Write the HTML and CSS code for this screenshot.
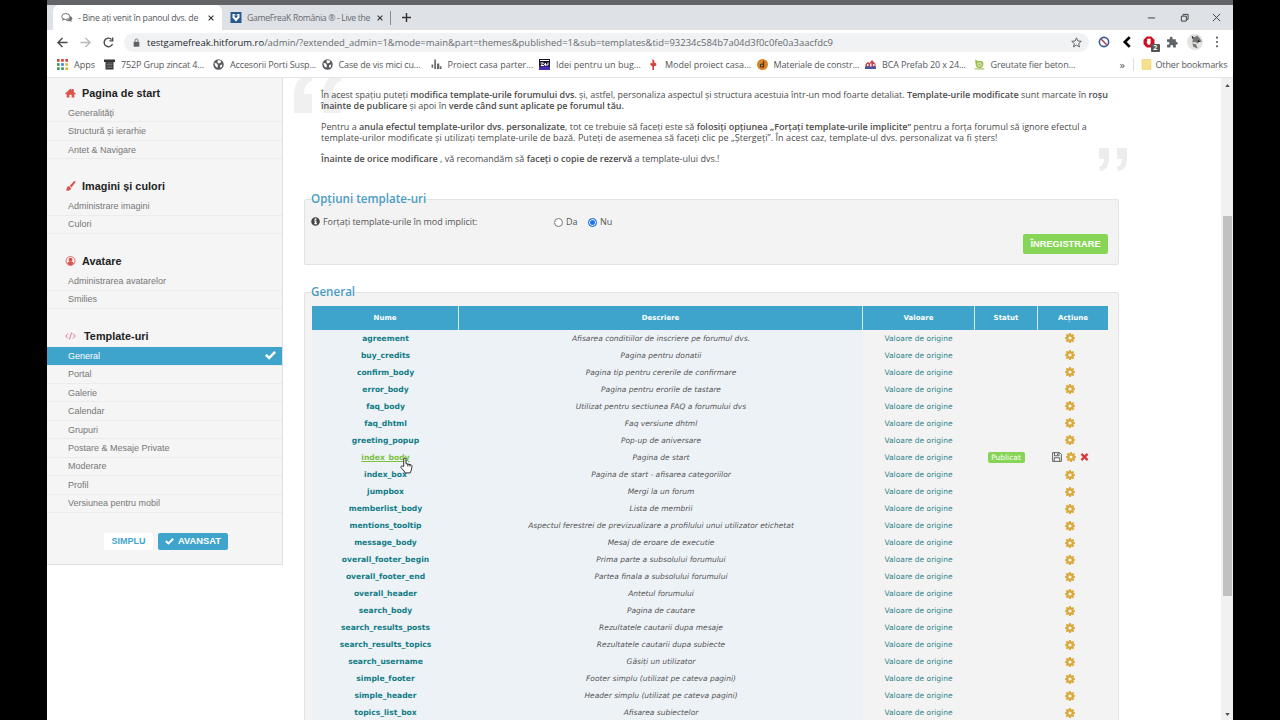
FILE: index.html
```html
<!DOCTYPE html>
<html lang="ro">

<head>
  <meta charset="UTF-8">
  <title>Panou de administrare</title>
  <link rel="stylesheet" href="styles.css">
</head>

<body>
  <!-- shared icons -->
  <svg class="defs">
    <symbol id="gear" viewBox="0 0 20 20">
      <path fill-rule="evenodd" d="M8.3 0h3.4l.5 2.6 1.7.7 2.2-1.5 2.3 2.3-1.5 2.2.7 1.7 2.4.5v3.2l-2.4.5-.7 1.7 1.5 2.2-2.3 2.3-2.2-1.5-1.7.7-.5 2.4H8.3l-.5-2.4-1.7-.7-2.2 1.5-2.3-2.3 1.5-2.2-.7-1.7L0 11.7V8.3l2.4-.5.7-1.7-1.5-2.2 2.3-2.3 2.2 1.5 1.7-.7zM10 6.8a3.2 3.2 0 1 0 0 6.4 3.2 3.2 0 0 0 0-6.4z" />
    </symbol>
    <symbol id="check" viewBox="0 0 20 16">
      <path d="M0 8.5l3.2-3.2 4.3 4.2L16.8 0 20 3.2 7.5 15.7z" />
    </symbol>
    <symbol id="globe" viewBox="0 0 20 20">
      <circle cx="10" cy="10" r="9.5" fill="#55585c" />
      <path d="M3 7l4 1 2 4-1 4-3-2-2-4zM9 2l6 1-1 4-4 1-2-2zM13 11l4-1-1 5-3 1z" fill="#fff" />
    </symbol>
  </svg>

  <div class="screen">
    <div class="strip"></div>

    <div class="tabs">
      <div class="tab active">
        <svg class="tab-icon" viewBox="0 0 24 20">
          <ellipse cx="9.5" cy="8" rx="8" ry="6" fill="#fff" stroke="#666" stroke-width="1.8" />
          <path d="M4 12l-2 5 6-3zM18 7c7 3 5 8 2 9l2 3-5-2c-4 1-7-1-7-2 5 0 9-3 8-8z" fill="#777" />
        </svg>
        <span class="tab-text">- Bine ați venit în panoul dvs. de</span>
        <svg class="close" viewBox="0 0 10 10"><path d="M1 1l8 8M9 1l-8 8" /></svg>
      </div>
      <div class="tab second">
        <svg class="tab-icon" viewBox="0 0 22 22">
          <rect width="22" height="22" fill="#285a8e" />
          <path d="M4 4h14v7l-7 8-7-8z" fill="#fff" />
          <path d="M7 7l4 5 4-5M8 3l3 4 3-4" fill="#285a8e" stroke="#285a8e" />
        </svg>
        <span class="tab-text">GameFreaK România ® - Live the</span>
        <svg class="close" viewBox="0 0 10 10"><path d="M1 1l8 8M9 1l-8 8" /></svg>
      </div>
      <svg class="plus" viewBox="0 0 10 10"><path d="M5 0v10M0 5h10" /></svg>
      <div class="win">
        <svg viewBox="0 0 10 10"><path d="M1 5.5h8" /></svg>
        <svg viewBox="0 0 10 10"><path d="M1.5 3.5h5.5v5.5h-5.5zM3.5 3V1.5H9V7H7.5" /></svg>
        <svg viewBox="0 0 10 10"><path d="M1 1l8 8M9 1l-8 8" /></svg>
      </div>
    </div>

    <div class="toolbar">
      <div class="nav">
        <svg viewBox="0 0 12 12"><path d="M11.5 6H1.5M6 1L1 6l5 5" /></svg>
        <svg class="off" viewBox="0 0 12 12"><path d="M.5 6h10M6 1l5 5-5 5" /></svg>
        <svg viewBox="0 0 12 12"><path d="M10.4 7.5a4.7 4.7 0 1 1-1-4.8M10.6 .5v3.7H7" /></svg>
      </div>
      <div class="address">
        <svg class="lock" viewBox="0 0 10 12">
          <path d="M1 5h8v7H1z" fill="#5f6368" />
          <path d="M3 5V3a2 2 0 0 1 4 0v2" fill="none" stroke="#5f6368" stroke-width="1.3" />
        </svg>
        <span class="url"><b>testgamefreak.hitforum.ro</b>/admin/?extended_admin=1&amp;mode=main&amp;part=themes&amp;published=1&amp;sub=templates&amp;tid=93234c584b7a04d3f0c0fe0a3aacfdc9</span>
        <svg class="star" viewBox="0 0 20 20"><path d="M10 1.5l2.5 5.8 6.2.5-4.7 4.1 1.4 6.1-5.4-3.3L4.6 18 6 11.9 1.3 7.8l6.2-.5z" /></svg>
      </div>
      <div class="extensions">
        <svg viewBox="0 0 22 22"><circle cx="11" cy="11" r="8.5" fill="#fff" stroke="#3e5a94" stroke-width="3" /><path d="M6 6l10 10" stroke="#a43a52" stroke-width="2.5" /></svg>
        <svg viewBox="0 0 22 22"><path d="M16 2L7 11l9 9" fill="none" stroke="#000" stroke-width="5" /></svg>
        <span class="adblock">
          <svg viewBox="0 0 22 22"><path d="M7 1h8l6 6v8l-6 6H7l-6-6V7z" fill="#cb1121" /><path d="M8 5h6v7l-1 4H9l-2-4z" fill="#fff" /></svg>
          <span class="count">2</span>
        </span>
        <svg viewBox="0 0 22 22"><path d="M2 6h5V4a2.500 2.500 0 0 1 5 0v2h6v5h1a2.500 2.500 0 0 1 0 5h-1v5h-5v-2a2.500 2.500 0 0 0-5 0v2H2v-5h2a2.500 2.500 0 0 0 0-5H2z" fill="#5f6368" /></svg>
        <svg class="avatar" viewBox="0 0 30 30"><circle cx="15" cy="15" r="15" fill="#e3e3e0" /><path d="M8 4l4 3 7-4 5 5 4 7-6-1-2 4-5-3-5 1 1-6zM10 18l7 1 3 8-8-3z" fill="#777" /><path d="M9 3l4 4-3 2zM20 11l5 3-4 2z" fill="#222" /></svg>
        <svg class="dots" viewBox="0 0 4 14"><circle cx="2" cy="2" r="1.3" /><circle cx="2" cy="7" r="1.3" /><circle cx="2" cy="12" r="1.3" /></svg>
      </div>
    </div>

    <div class="bookmarks">
      <div class="bm apps">
        <svg viewBox="0 0 10 10">
          <path d="M0 0h2.4v2.4H0zM3.8 0h2.4v2.4H3.8zM7.6 0H10v2.4H7.6z" fill="#d9453d" />
          <path d="M0 3.8h2.4v2.4H0z" fill="#3b9b58" /><path d="M3.8 3.8h2.4v2.4H3.8z" fill="#3a7ad9" /><path d="M7.6 3.8H10v2.4H7.6z" fill="#e8b42c" />
          <path d="M0 7.6h2.4V10H0zM3.8 7.6h2.4V10H3.8z" fill="#3b9b58" /><path d="M7.6 7.6H10V10H7.6z" fill="#e8b42c" />
        </svg>Apps</div>
      <div class="bm zinc">
        <svg viewBox="0 0 22 20"><path d="M0 0h22v5H0zM3 5h16v15H3z" fill="#333" /><path d="M5 7h12M5 10h12M5 13h12M5 16h12" stroke="#aaa" /></svg>752P Grup zincat 4...</div>
      <div class="bm porti"><svg><use href="#globe" /></svg>Accesorii Porti Susp...</div>
      <div class="bm vis"><svg><use href="#globe" /></svg>Case de vis mici cu...</div>
      <div class="bm parter">
        <svg viewBox="0 0 20 20"><path d="M1 10h3v6H1zM6 1h3v17H6zM11 8h4v10h-4zM16 13h3v5h-3z" fill="#666" /></svg>Proiect casa parter...</div>
      <div class="bm bug">
        <svg viewBox="0 0 22 22"><path d="M0 0h22v22H0z" fill="#17132a" /><path d="M0 15h22v7H0z" fill="#4a2bb5" /><path d="M2 3h18M3 8h6l-5 5h6M13 13V8l-2 4h7V7" fill="none" stroke="#fff" stroke-width="2" /></svg>Idei pentru un bug...</div>
      <div class="bm model">
        <svg viewBox="0 0 20 20"><path d="M8 0l4 3-1 3 4 2v4l-4 1v7H8v-6l-4-4 1-3 3 1z" fill="#d2423c" /></svg>Model proiect casa...</div>
      <div class="bm materiale">
        <svg viewBox="0 0 20 20"><circle cx="10" cy="10" r="10" fill="#d88428" /><circle cx="9" cy="12" r="3" fill="none" stroke="#432" stroke-width="2" /><path d="M12 3v12" stroke="#432" stroke-width="2" /></svg>Materiale de constr...</div>
      <div class="bm bca">
        <svg viewBox="0 0 22 20"><path d="M1 9l5-4 3 2 5-6 7 8v6H1z" fill="#c6454c" /><path d="M0 14h22v5H0z" fill="#4855a5" /><path d="M4 9h3v4H4zM10 8h3v6h-3zM16 9h3v4h-3z" fill="#f0e6ee" /></svg>BCA Prefab 20 x 24...</div>
      <div class="bm fier">
        <svg viewBox="0 0 20 20"><path d="M2 1l6 3c8-2 11 3 8 9-3 5-12 5-13-2z" fill="#9abf4a" /><circle cx="10" cy="10" r="3" fill="none" stroke="#fff" stroke-width="1.5" /><path d="M1 18h18" stroke="#9abf4a" stroke-width="2" /></svg>Greutate fier beton...</div>
      <span class="more">»</span>
      <div class="bm other">
        <svg viewBox="0 0 18 20"><path d="M1 1h16v18H1z" fill="#f8e18c" stroke="#e3c96a" /></svg>Other bookmarks</div>
    </div>

    <div class="page">
      <div class="sidebar">
        <h3><svg viewBox="0 0 20 18"><path d="M10 1l3 3V1.5h3V7l4 3.5-1.2 1.2L17 10.3V17h-5v-5H8v5H3v-6.7l-1.8 1.4L0 10.5z" /></svg>Pagina de start</h3>
        <ul>
          <li>Generalități</li>
          <li>Structură și ierarhie</li>
          <li>Antet &amp; Navigare</li>
        </ul>
        <h3><svg viewBox="0 0 20 20"><path d="M19.5.5c1 1 0 2.5-1 4L12 13 8.5 9.5 16 1.5c1-1 2.5-2 3.5-1zM7.5 10.500l3.500 3.500c0 4-5 7-11 4.500 3-1 2-3 3-5.500.8-2 2.500-3 4.500-2.500z" /></svg>Imagini și culori</h3>
        <ul>
          <li>Administrare imagini</li>
          <li>Culori</li>
        </ul>
        <h3><svg viewBox="0 0 20 20"><circle cx="10" cy="10" r="9" fill="none" stroke="#d9534f" stroke-width="1.6" /><circle cx="10" cy="7.5" r="4" /><path d="M3.5 15c1-3 3-4 6.5-4s5.5 1 6.5 4c-3 4-10 4-13 0z" /></svg>Avatare</h3>
        <ul>
          <li>Administrarea avatarelor</li>
          <li>Smilies</li>
        </ul>
        <h3 class="code"><svg viewBox="0 0 22 16"><path d="M6 3L1.5 8 6 13M16 3l4.5 5-4.5 5M13 1L9 15" fill="none" stroke="#d9627a" stroke-width="1.7" /></svg>Template-uri</h3>
        <ul>
          <li class="active">General<svg><use href="#check" /></svg></li>
          <li>Portal</li>
          <li>Galerie</li>
          <li>Calendar</li>
          <li>Grupuri</li>
          <li>Postare &amp; Mesaje Private</li>
          <li>Moderare</li>
          <li>Profil</li>
          <li>Versiunea pentru mobil</li>
        </ul>
        <div class="modes">
          <span class="simple">SIMPLU</span>
          <span class="advanced"><svg><use href="#check" /></svg>AVANSAT</span>
        </div>
      </div>

      <div class="main">
        <div class="intro">
          <svg class="quote-left" viewBox="0 0 48 39"><path d="M0 39V22C0 8 7 0 18 0v7c-5 1-8 6-8 13h8v19zM29 39V22C29 8 36 0 47 0v7c-5 1-8 6-8 13h8v19z" /></svg>
          <p>
            <span class="l1">În acest spațiu puteți <b>modifica template-urile forumului dvs.</b> și, astfel, personaliza aspectul și structura acestuia într-un mod foarte detaliat. <b>Template-urile modificate</b> sunt marcate în <b>roșu</b></span>
            <span class="l2"><b>înainte de publicare</b> și apoi în <b>verde când sunt aplicate pe forumul tău.</b></span>
          </p>
          <p>
            <span class="l3">Pentru a <b>anula efectul template-urilor dvs. personalizate</b>, tot ce trebuie să faceți este să <b>folosiți opțiunea „Forțați template-urile implicite”</b> pentru a forța forumul să ignore efectul a</span>
            <span class="l4">template-urilor modificate și utilizați template-urile de bază. Puteți de asemenea să faceți clic pe „Ștergeți”. În acest caz, template-ul dvs. personalizat va fi șters!</span>
          </p>
          <p>
            <span class="l5"><b>Înainte de orice modificare</b> , vă recomandăm să <b>faceți o copie de rezervă</b> a template-ului dvs.!</span>
          </p>
          <svg class="quote-right" viewBox="0 0 30 23"><path d="M1 0h10v11c0 7-4 12-9 12l-1-4c3-1 5-3 5-8H1zM19 0h10v11c0 7-4 12-9 12l-1-4c3-1 5-3 5-8h-5z" /></svg>
        </div>

        <fieldset class="options">
          <legend>Opțiuni template-uri</legend>
          <div class="option">
            <svg class="info" viewBox="0 0 20 20"><circle cx="10" cy="10" r="9.5" fill="#444" /><path d="M8 3.5h4v3H8zM7 8h5v6h1.5v2h-6.5v-2h1.500v-4H7z" fill="#fff" /></svg>
            <label class="question">Forțați template-urile în mod implicit:</label>
            <span class="radio"></span><label class="da">Da</label>
            <span class="radio checked"></span><label>Nu</label>
          </div>
          <span class="save">ÎNREGISTRARE</span>
        </fieldset>

        <fieldset class="general">
          <legend>General</legend>
          <table>
            <colgroup><col class="c-name"><col class="c-desc"><col class="c-value"><col class="c-status"><col class="c-action"></colgroup>
            <thead>
              <tr><th>Nume</th><th>Descriere</th><th>Valoare</th><th>Statut</th><th>Acțiune</th></tr>
            </thead>
            <tbody>
              <tr><td>agreement</td><td>Afisarea conditiilor de inscriere pe forumul dvs.</td><td>Valoare de origine</td><td></td><td><svg><use href="#gear" /></svg></td></tr>
              <tr><td>buy_credits</td><td>Pagina pentru donatii</td><td>Valoare de origine</td><td></td><td><svg><use href="#gear" /></svg></td></tr>
              <tr><td>confirm_body</td><td>Pagina tip pentru cererile de confirmare</td><td>Valoare de origine</td><td></td><td><svg><use href="#gear" /></svg></td></tr>
              <tr><td>error_body</td><td>Pagina pentru erorile de tastare</td><td>Valoare de origine</td><td></td><td><svg><use href="#gear" /></svg></td></tr>
              <tr><td>faq_body</td><td>Utilizat pentru sectiunea FAQ a forumului dvs</td><td>Valoare de origine</td><td></td><td><svg><use href="#gear" /></svg></td></tr>
              <tr><td>faq_dhtml</td><td>Faq versiune dhtml</td><td>Valoare de origine</td><td></td><td><svg><use href="#gear" /></svg></td></tr>
              <tr><td>greeting_popup</td><td>Pop-up de aniversare</td><td>Valoare de origine</td><td></td><td><svg><use href="#gear" /></svg></td></tr>
              <tr class="published">
                <td>
                  <span class="hovered">index_body
                    <svg class="cursor" viewBox="0 0 14 18"><path d="M4 10V2.200a1.200 1.200 0 0 1 2.400 0V7l5.200 1.200c1 .3 1.500 1 1.300 2L12 14.500 11 17H5.500L4.500 15 1.200 11.500C.3 10.300 1.500 9 2.700 9.700z" fill="#fff" stroke="#222" stroke-width="1" /><path d="M8.500 7.500V10M10.700 8v2.200" stroke="#222" /></svg>
                  </span>
                </td>
                <td>Pagina de start</td><td>Valoare de origine</td>
                <td><span class="badge">Publicat</span></td>
                <td>
                  <div class="actions">
                    <svg class="floppy" viewBox="0 0 20 20"><path d="M1.2 1.2h14l3.6 3.6v14H1.2zM5 1.5v6h9v-6M4.5 18.5v-7h11v7" /><path d="M11 3v3" /></svg>
                    <svg><use href="#gear" /></svg>
                    <svg class="delete" viewBox="0 0 16 16"><path d="M2.5 2.5l11 11M13.5 2.5l-11 11" /></svg>
                  </div>
                </td>
              </tr>
              <tr><td>index_box</td><td>Pagina de start - afisarea categoriilor</td><td>Valoare de origine</td><td></td><td><svg><use href="#gear" /></svg></td></tr>
              <tr><td>jumpbox</td><td>Mergi la un forum</td><td>Valoare de origine</td><td></td><td><svg><use href="#gear" /></svg></td></tr>
              <tr><td>memberlist_body</td><td>Lista de membrii</td><td>Valoare de origine</td><td></td><td><svg><use href="#gear" /></svg></td></tr>
              <tr><td>mentions_tooltip</td><td>Aspectul ferestrei de previzualizare a profilului unui utilizator etichetat</td><td>Valoare de origine</td><td></td><td><svg><use href="#gear" /></svg></td></tr>
              <tr><td>message_body</td><td>Mesaj de eroare de executie</td><td>Valoare de origine</td><td></td><td><svg><use href="#gear" /></svg></td></tr>
              <tr><td>overall_footer_begin</td><td>Prima parte a subsolului forumului</td><td>Valoare de origine</td><td></td><td><svg><use href="#gear" /></svg></td></tr>
              <tr><td>overall_footer_end</td><td>Partea finala a subsolului forumului</td><td>Valoare de origine</td><td></td><td><svg><use href="#gear" /></svg></td></tr>
              <tr><td>overall_header</td><td>Antetul forumului</td><td>Valoare de origine</td><td></td><td><svg><use href="#gear" /></svg></td></tr>
              <tr><td>search_body</td><td>Pagina de cautare</td><td>Valoare de origine</td><td></td><td><svg><use href="#gear" /></svg></td></tr>
              <tr><td>search_results_posts</td><td>Rezultatele cautarii dupa mesaje</td><td>Valoare de origine</td><td></td><td><svg><use href="#gear" /></svg></td></tr>
              <tr><td>search_results_topics</td><td>Rezultatele cautarii dupa subiecte</td><td>Valoare de origine</td><td></td><td><svg><use href="#gear" /></svg></td></tr>
              <tr><td>search_username</td><td>Găsiți un utilizator</td><td>Valoare de origine</td><td></td><td><svg><use href="#gear" /></svg></td></tr>
              <tr><td>simple_footer</td><td>Footer simplu (utilizat pe cateva pagini)</td><td>Valoare de origine</td><td></td><td><svg><use href="#gear" /></svg></td></tr>
              <tr><td>simple_header</td><td>Header simplu (utilizat pe cateva pagini)</td><td>Valoare de origine</td><td></td><td><svg><use href="#gear" /></svg></td></tr>
              <tr><td>topics_list_box</td><td>Afisarea subiectelor</td><td>Valoare de origine</td><td></td><td><svg><use href="#gear" /></svg></td></tr>
            </tbody>
          </table>
        </fieldset>
      </div>

      <div class="scrollbar">
        <svg viewBox="0 0 6 4"><path d="M0 4l3-4 3 4z" /></svg>
        <div class="thumb"></div>
        <svg viewBox="0 0 6 4"><path d="M0 0l3 4 3-4z" /></svg>
      </div>
    </div>
  </div>
</body>

</html>
```
FILE: styles.css
```css
* {
  box-sizing: border-box;
}

body {
  margin: 0;
  height: 720px;
  overflow: hidden;
  background: #000;
  font-family: "Open Sans", "Noto Sans", sans-serif;
  font-size: 9px;
  color: #4c4c4c;
}

svg {
  display: block;
  flex: none;
}

.defs {
  display: none;
}

.screen {
  display: flex;
  flex-direction: column;
  width: 1186px;
  height: 720px;
  margin: 0 auto;
  background: #fff;
  white-space: nowrap;
  overflow: hidden;
}

.strip {
  height: 5px;
  flex: none;
  background: #636467;
}

/* tabs */
.tabs {
  display: flex;
  align-items: center;
  height: 25px;
  flex: none;
  padding-left: 6px;
  background: #dee1e6;
}

.tab {
  display: flex;
  align-items: center;
  height: 24px;
  color: #666a6e;
}

.tab.active {
  width: 169px;
  height: 25px;
  padding: 0 8px;
  border-radius: 6px 6px 0 0;
  background: #fff;
  color: #55585c;
}

.tab.second {
  width: 169px;
  height: 14px;
  padding: 0 8px;
  border-right: 1px solid #888b90;
}

.tab-icon {
  width: 12px;
  height: 11px;
}

.tab-text {
  width: 122px;
  margin-left: 5px;
  font-size: 8.7px;
  letter-spacing: -0.35px;
}

.tab.active .tab-text {
  letter-spacing: -0.25px;
}

.close {
  width: 6px;
  height: 6px;
  margin-left: 8px;
  fill: none;
  stroke: #333;
  stroke-width: 1.8;
}

.plus {
  width: 9px;
  height: 9px;
  margin-left: 11px;
  stroke: #333;
  stroke-width: 1.6;
}

.win {
  display: flex;
  gap: 23.5px;
  margin-left: auto;
  margin-right: 12px;
}

.win svg {
  width: 9px;
  height: 9px;
  fill: none;
  stroke: #333;
}

/* address bar */
.toolbar {
  display: flex;
  align-items: center;
  height: 24px;
  flex: none;
  padding-left: 10px;
}

.nav {
  display: flex;
  gap: 12px;
}

.nav svg {
  width: 11px;
  height: 11px;
  fill: none;
  stroke: #46494d;
  stroke-width: 1.5;
}

.nav .off {
  stroke: #b5b7ba;
}

.address {
  display: flex;
  align-items: center;
  width: 965px;
  height: 19px;
  margin-left: 10px;
  padding: 0 7px 0 9px;
  border-radius: 10px;
  background: #f0f2f4;
}

.lock {
  width: 7px;
  height: 9px;
}

.url {
  margin-left: 7px;
  font-size: 9.48px;
  color: #686c70;
}

.url b {
  font-weight: 400;
  color: #27292c;
}

.star {
  width: 11px;
  height: 11px;
  margin-left: auto;
  fill: none;
  stroke: #5f6368;
  stroke-width: 1.8;
}

.extensions {
  display: flex;
  align-items: center;
  margin-left: 9px;
}

.extensions svg {
  width: 12px;
  height: 12px;
  margin-right: 10.6px;
}

.adblock {
  position: relative;
}

.count {
  position: absolute;
  right: 6px;
  bottom: -4px;
  width: 9px;
  height: 8px;
  border-radius: 1px;
  background: #555;
  color: #fff;
  font-size: 7px;
  font-weight: 700;
  line-height: 8px;
  text-align: center;
}

.extensions .avatar {
  width: 16px;
  height: 16px;
  margin-left: -1px;
}

.extensions .dots {
  width: 4px;
  height: 12px;
  margin: 0 0 0 1px;
  fill: #5f6368;
}

/* bookmarks */
.bookmarks {
  display: flex;
  align-items: center;
  height: 24px;
  flex: none;
  padding: 0 0 2px 10px;
  border-bottom: 1px solid #e3e4e6;
  color: #55585c;
}

.bm {
  display: flex;
  align-items: center;
}

.bm svg {
  width: 11px;
  height: 11px;
  margin-right: 6px;
}

.apps {
  width: 47px;
}

.zinc {
  width: 109px;
}

.porti {
  width: 108.5px;
}

.vis {
  width: 109px;
}

.parter {
  width: 108.5px;
}

.bug {
  width: 109px;
}

.model {
  width: 108.5px;
}

.materiale {
  width: 108.5px;
}

.bca {
  width: 108.5px;
}

.fier {
  width: 146px;
}

.bm.zinc,
.bm.vis,
.bm.materiale,
.bm.bca,
.bm.other {
  letter-spacing: -0.12px;
}

.bm.zinc {
  letter-spacing: -0.3px;
}

.bm.fier,
.bm.bca,
.bm.vis {
  letter-spacing: -0.35px;
}

.bm.porti {
  letter-spacing: -0.45px;
}

.more {
  width: 13px;
  font-size: 11px;
}

.other {
  padding-left: 7px;
  border-left: 1px solid #ddd;
}

.bm.other {
  letter-spacing: -0.46px;
}

.bm.zinc,
.bm.porti,
.bm.vis,
.bm.bca,
.bm.fier,
.bm.other {
  letter-spacing: -0.14px;
}

.other svg {
  margin-right: 4px;
}

/* page */
.page {
  display: flex;
  flex: 1;
  min-height: 0;
  overflow: hidden;
}

.sidebar {
  width: 236px;
  height: 487px;
  flex: none;
  overflow: hidden;
  border-right: 1px solid #dfe0e2;
  border-bottom: 1px solid #dfe0e2;
  background: #f5f5f5;
  font-family: "Liberation Sans", sans-serif;
}

.sidebar h3 {
  display: flex;
  align-items: center;
  height: 38px;
  margin: 0;
  padding: 15px 0 0 18px;
  color: #222;
  font-size: 10.8px;
  letter-spacing: 0.05px;
}

.sidebar h3:first-child {
  margin-top: -12px;
}

.sidebar h3 svg {
  width: 11px;
  height: 10px;
  margin-right: 6px;
  fill: #d9534f;
}

.sidebar h3.code svg {
  margin-right: 8px;
}

.sidebar ul {
  margin: 0;
  padding: 0;
  list-style: none;
}

.sidebar li {
  display: flex;
  align-items: center;
  height: 18.44px;
  padding-left: 21px;
  border-bottom: 1px solid #ececec;
  color: #777;
}

.sidebar li.active {
  justify-content: space-between;
  padding-right: 6px;
  background: #3fa4cb;
  color: #fff;
}

.sidebar li svg {
  width: 11px;
  height: 9px;
  fill: #fff;
}

.modes {
  display: flex;
  gap: 5px;
  margin: 20px 0 0 57px;
  font-size: 9.3px;
  font-weight: 700;
  line-height: 17px;
}

.simple {
  width: 49px;
  background: #fff;
  color: #3fa4cb;
  font-size: 9px;
  text-align: center;
}

.advanced {
  display: flex;
  align-items: center;
  justify-content: center;
  width: 70px;
  border-radius: 2px;
  background: #3fa4cb;
  color: #fff;
}

.advanced svg {
  width: 9px;
  height: 7px;
  margin-right: 4px;
  fill: #fff;
}

.main {
  width: 815px;
  margin-left: 21px;
}

.intro {
  position: relative;
  height: 114px;
  padding: 12.4px 0 0 17px;
  line-height: 10.65px;
}

.intro p {
  position: relative;
  margin: 0 0 10.65px;
}

.intro p span {
  display: block;
}

.intro b {
  font-weight: 600;
}

.intro .l1,
.intro .l2 {
  letter-spacing: -0.025px;
}

.intro .l4 {
  letter-spacing: 0.062px;
}

.quote-left {
  position: absolute;
  left: -10px;
  top: -4px;
  width: 48px;
  height: 39px;
  fill: #f0f0f0;
}

.quote-right {
  position: absolute;
  right: -9px;
  top: 70px;
  width: 30px;
  height: 23px;
  fill: #ececec;
}

fieldset {
  margin: 0;
  padding: 0 7px;
  border: 1px solid #e2e3e4;
  border-radius: 2px;
  background: #f3f3f3;
}

legend {
  height: 14px;
  margin-left: -1px;
  padding: 0;
  color: #4a9cc4;
  font-size: 11.6px;
  font-weight: 600;
  line-height: 14px;
}

.options {
  height: 73px;
}

.option {
  display: flex;
  align-items: center;
  height: 12px;
  margin-top: 9px;
  color: #555;
  letter-spacing: -0.04px;
}

.info {
  width: 9px;
  height: 9px;
  margin: 0 3px 0 -1px;
}

.question {
  width: 231px;
}

.radio {
  width: 9px;
  height: 9px;
  margin: 2px 3px 0 0;
  border: 1px solid #777;
  border-radius: 50%;
  background: #fff;
}

.radio.checked {
  border-color: #1a73e8;
  background: #1a73e8;
  box-shadow: inset 0 0 0 1px #fff;
}

.da {
  width: 22px;
}

.save {
  display: block;
  width: 85px;
  height: 20px;
  margin: 7px 3px 0 auto;
  border-radius: 2px;
  background: #87d557;
  color: #fff;
  font-family: "Liberation Sans", sans-serif;
  font-size: 9.3px;
  font-weight: 700;
  line-height: 20px;
  text-align: center;
}

.general {
  height: 500px;
  margin-top: 20px;
}

/* templates table */
table {
  width: 796px;
  margin-top: 7px;
  table-layout: fixed;
  border-collapse: separate;
  border-spacing: 0;
  font-family: "DejaVu Sans", sans-serif;
  font-size: 7.5px;
  text-align: center;
}

.c-name {
  width: 147px;
}

.c-desc {
  width: 404px;
}

.c-value {
  width: 112px;
}

.c-status {
  width: 63px;
}

th {
  height: 24px;
  padding: 0;
  border-right: 1px solid #d5e9f1;
  background: #3fa4cb;
  color: #fff;
  font-size: 7px;
}

th:last-child {
  border-right: 0;
}

td {
  height: 17px;
  padding: 0;
  line-height: 12px;
}

td:nth-child(1) {
  background: #edf2f7;
  color: #127c86;
  font-size: 7.6px;
  font-weight: 700;
}

td:nth-child(2) {
  background: #edf2f7;
  color: #555;
  font-style: italic;
}

td:nth-child(3) {
  padding-right: 1px;
  color: #2f8589;
}

td:nth-child(4) {
  padding-right: 1px;
}

td:last-child {
  padding: 0 6px 1px 0;
}

td svg {
  width: 10px;
  height: 10px;
  margin: 0 auto;
  fill: #d9aa3a;
}

.published td {
  height: 17.5px;
}

.hovered {
  position: relative;
  color: #7cc142;
  text-decoration: underline;
}

.cursor {
  position: absolute;
  left: 39px;
  top: 4px;
  width: 13px;
  height: 17px;
  z-index: 1;
}

.badge {
  display: inline-block;
  width: 37px;
  border-radius: 2px;
  background: #87d557;
  color: #fff;
  line-height: 11px;
}

.actions {
  display: flex;
  justify-content: center;
  gap: 4px;
}

.actions svg {
  margin: 0;
}

.actions .floppy {
  fill: none;
  stroke: #555;
  stroke-width: 1.8;
}

.actions .delete {
  width: 9px;
  height: 10px;
  fill: none;
  stroke: #d43a3a;
  stroke-width: 4;
}

/* scrollbar */
.scrollbar {
  display: flex;
  flex-direction: column;
  align-items: center;
  width: 12px;
  margin-left: auto;
  padding: 6px 0 4px;
  background: #f1f1f1;
}

.scrollbar svg {
  width: 5px;
  height: 3px;
  fill: #505050;
}

.thumb {
  width: 9px;
  height: 380px;
  margin: 129px 0 auto;
  background: #c1c1c1;
}
```
